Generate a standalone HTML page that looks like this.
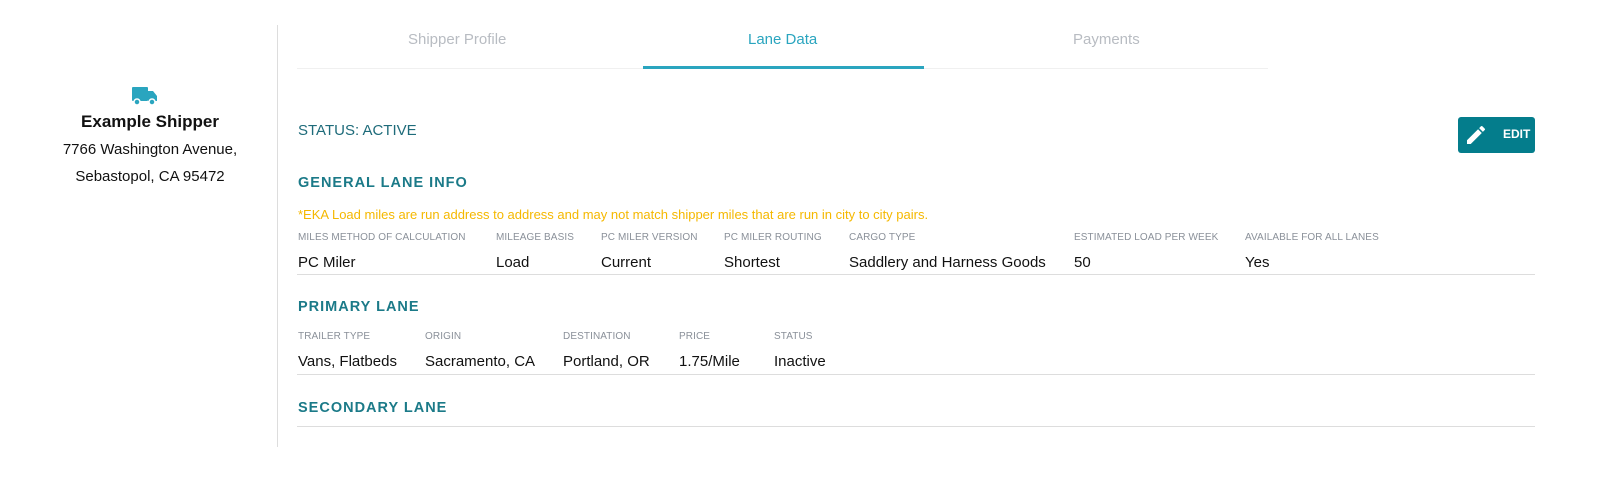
<!DOCTYPE html><html><head><style>
body{margin:0;width:1600px;height:481px;background:#fff;font-family:"Liberation Sans",sans-serif;position:relative;overflow:hidden}
.a{position:absolute;white-space:nowrap}
.l{font-size:10px;color:#8a9099;letter-spacing:.1px}
.v{font-size:15px;color:#111}
.h{font-size:14.5px;font-weight:bold;color:#1b7a88;letter-spacing:1px}
.r{position:absolute;left:297px;width:1238px;height:1px;background:#ddd}
</style></head><body>
<div class="a" style="left:277px;top:25px;width:1px;height:422px;background:#ddd"></div>
<div class="a" style="left:297px;top:68px;width:971px;height:1px;background:#f0f0f0"></div>
<div class="a" style="left:643px;top:66px;width:281px;height:3px;background:#2aa5bf"></div>
<div class="a" style="left:408px;top:31px;font-size:15px;color:#b8bcc2">Shipper Profile</div>
<div class="a" style="left:748px;top:31px;font-size:15px;color:#2aa5bf">Lane Data</div>
<div class="a" style="left:1073px;top:31px;font-size:15px;color:#b8bcc2">Payments</div>
<svg class="a" style="left:132px;top:87px" width="26" height="19" viewBox="0 0 26 19"><rect x="0" y="0" width="16" height="14" rx="1" fill="#2aa5bf"/><path d="M16 4h5l4 5v5H16z" fill="#2aa5bf"/><circle cx="5" cy="15" r="3" fill="#2aa5bf" stroke="#fff" stroke-width="1.5"/><circle cx="20" cy="15" r="3" fill="#2aa5bf" stroke="#fff" stroke-width="1.5"/></svg>
<div class="a" style="left:0;width:300px;top:112px;text-align:center;font-size:17px;font-weight:bold;color:#111">Example Shipper</div>
<div class="a" style="left:0;width:300px;top:141px;text-align:center;font-size:15px;color:#111">7766 Washington Avenue,</div>
<div class="a" style="left:0;width:300px;top:168px;text-align:center;font-size:15px;color:#111">Sebastopol, CA 95472</div>
<div class="a" style="left:298px;top:122px;font-size:15px;color:#1e6b7a">STATUS: ACTIVE</div>
<div class="a" style="left:1458px;top:117px;width:77px;height:36px;background:#047d8c;border-radius:3px"></div>
<svg class="a" style="left:1464px;top:123px" width="24" height="24" viewBox="0 0 24 24"><path d="M3 17.25V21h3.75L17.81 9.94l-3.75-3.75L3 17.25zM20.71 7.04a1 1 0 000-1.41l-2.34-2.34a1 1 0 00-1.41 0l-1.83 1.83 3.75 3.75 1.83-1.83z" fill="#fff"/></svg>
<div class="a" style="left:1503px;top:127px;font-size:12px;font-weight:bold;color:#fff">EDIT</div>
<div class="a h" style="left:298px;top:175px">GENERAL LANE INFO</div>
<div class="a" style="left:298px;top:207px;font-size:13px;color:#f5b800">*EKA Load miles are run address to address and may not match shipper miles that are run in city to city pairs.</div>
<div class="a l" style="left:298px;top:232px">MILES METHOD OF CALCULATION</div>
<div class="a l" style="left:496px;top:232px">MILEAGE BASIS</div>
<div class="a l" style="left:601px;top:232px">PC MILER VERSION</div>
<div class="a l" style="left:724px;top:232px">PC MILER ROUTING</div>
<div class="a l" style="left:849px;top:232px">CARGO TYPE</div>
<div class="a l" style="left:1074px;top:232px">ESTIMATED LOAD PER WEEK</div>
<div class="a l" style="left:1245px;top:232px">AVAILABLE FOR ALL LANES</div>
<div class="a v" style="left:298px;top:254px">PC Miler</div>
<div class="a v" style="left:496px;top:254px">Load</div>
<div class="a v" style="left:601px;top:254px">Current</div>
<div class="a v" style="left:724px;top:254px">Shortest</div>
<div class="a v" style="left:849px;top:254px">Saddlery and Harness Goods</div>
<div class="a v" style="left:1074px;top:254px">50</div>
<div class="a v" style="left:1245px;top:254px">Yes</div>
<div class="r" style="top:274px"></div>
<div class="a h" style="left:298px;top:299px">PRIMARY LANE</div>
<div class="a l" style="left:298px;top:331px">TRAILER TYPE</div>
<div class="a l" style="left:425px;top:331px">ORIGIN</div>
<div class="a l" style="left:563px;top:331px">DESTINATION</div>
<div class="a l" style="left:679px;top:331px">PRICE</div>
<div class="a l" style="left:774px;top:331px">STATUS</div>
<div class="a v" style="left:298px;top:353px">Vans, Flatbeds</div>
<div class="a v" style="left:425px;top:353px">Sacramento, CA</div>
<div class="a v" style="left:563px;top:353px">Portland, OR</div>
<div class="a v" style="left:679px;top:353px">1.75/Mile</div>
<div class="a v" style="left:774px;top:353px">Inactive</div>
<div class="r" style="top:374px"></div>
<div class="a h" style="left:298px;top:400px">SECONDARY LANE</div>
<div class="r" style="top:426px"></div>
</body></html>
